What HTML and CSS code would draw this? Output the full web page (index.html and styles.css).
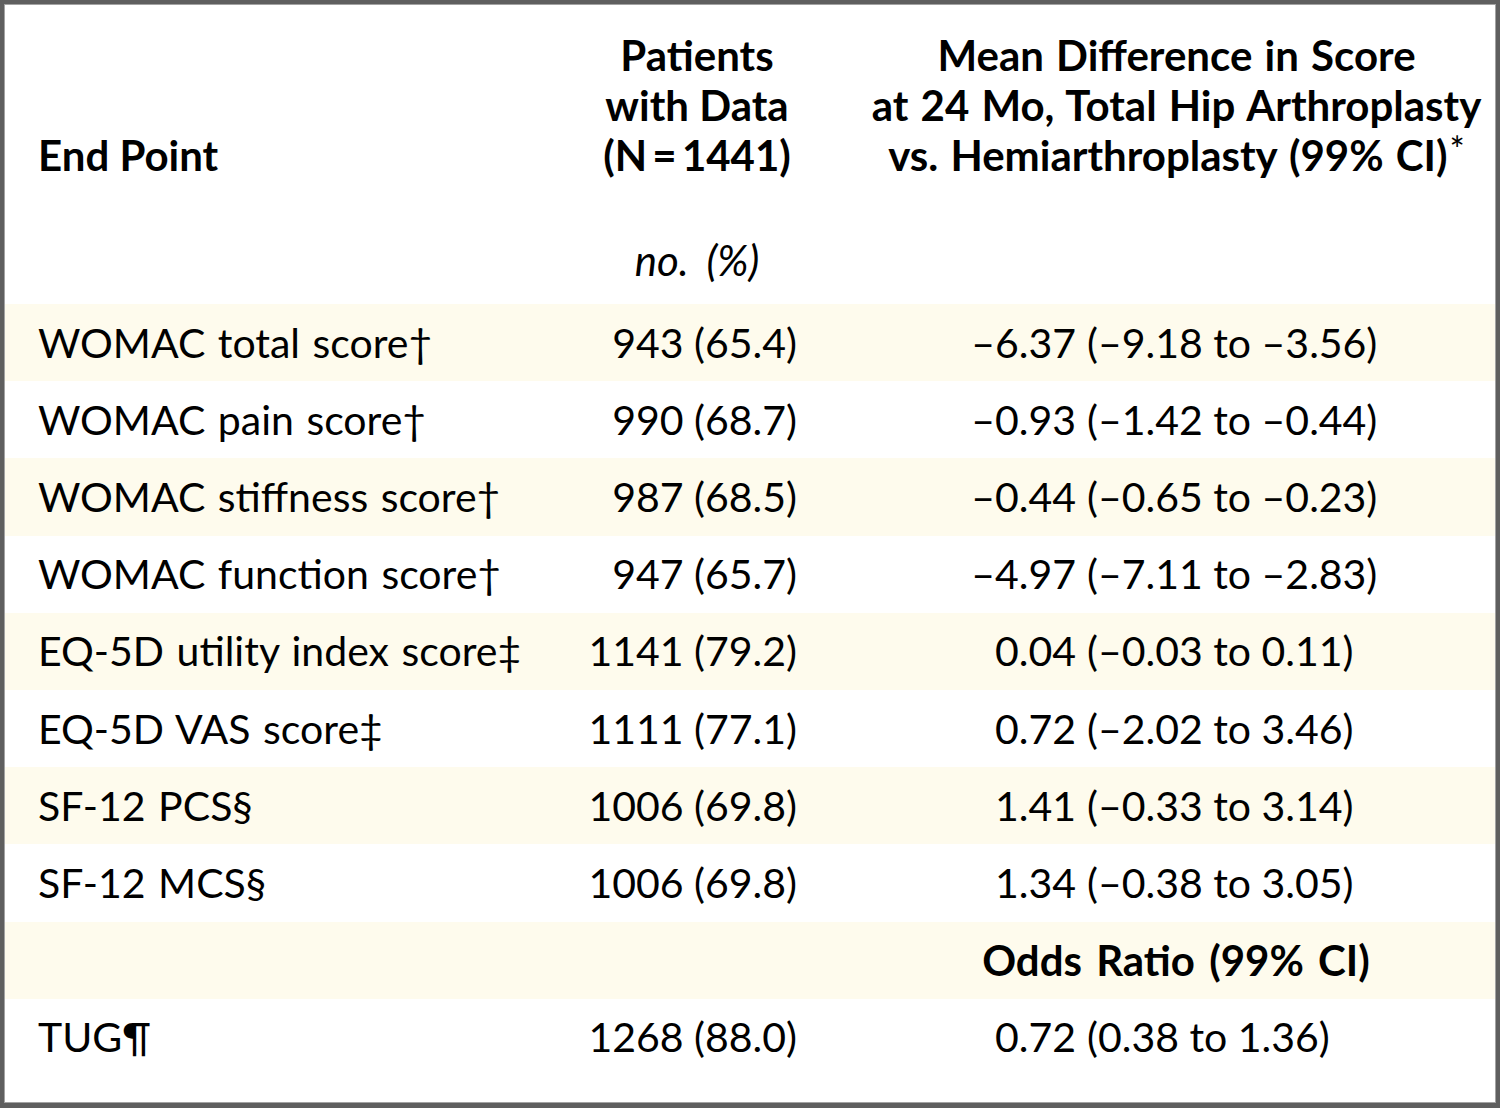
FILE: index.html
```html
<!DOCTYPE html>
<html lang="en">
<head>
<meta charset="utf-8">
<title>End Point Table</title>
<link rel="stylesheet" href="styles.css">
</head>
<body>
<div class="frame">
  <div class="inner">
    <div class="head">
      <div class="hcell h-end">End Point</div>
      <div class="hcell h-pat">Patients<br>with Data<br>(N&#8201;=&#8201;1441)</div>
      <div class="hcell h-mean">Mean Difference in Score<br>at 24 Mo, Total Hip Arthroplasty<br>vs. Hemiarthroplasty (99% CI)<span class="ast">*</span></div>
      <div class="unit-spacer"></div>
      <div class="unit">no. (%)</div>
      <div class="unit-spacer"></div>
    </div>

    <div class="row alt">
      <div class="c-label">WOMAC total score†</div>
      <div class="c-n">943 (65.4)</div>
      <div class="c-est">–6.37</div>
      <div class="c-ci">(–9.18 to –3.56)</div>
    </div>
    <div class="row">
      <div class="c-label">WOMAC pain score†</div>
      <div class="c-n">990 (68.7)</div>
      <div class="c-est">–0.93</div>
      <div class="c-ci">(–1.42 to –0.44)</div>
    </div>
    <div class="row alt">
      <div class="c-label">WOMAC stiffness score†</div>
      <div class="c-n">987 (68.5)</div>
      <div class="c-est">–0.44</div>
      <div class="c-ci">(–0.65 to –0.23)</div>
    </div>
    <div class="row">
      <div class="c-label">WOMAC function score†</div>
      <div class="c-n">947 (65.7)</div>
      <div class="c-est">–4.97</div>
      <div class="c-ci">(–7.11 to –2.83)</div>
    </div>
    <div class="row alt">
      <div class="c-label">EQ-5D utility index score‡</div>
      <div class="c-n">1141 (79.2)</div>
      <div class="c-est">0.04</div>
      <div class="c-ci">(–0.03 to 0.11)</div>
    </div>
    <div class="row">
      <div class="c-label">EQ-5D VAS score‡</div>
      <div class="c-n">1111 (77.1)</div>
      <div class="c-est">0.72</div>
      <div class="c-ci">(–2.02 to 3.46)</div>
    </div>
    <div class="row alt">
      <div class="c-label">SF-12 PCS§</div>
      <div class="c-n">1006 (69.8)</div>
      <div class="c-est">1.41</div>
      <div class="c-ci">(–0.33 to 3.14)</div>
    </div>
    <div class="row">
      <div class="c-label">SF-12 MCS§</div>
      <div class="c-n">1006 (69.8)</div>
      <div class="c-est">1.34</div>
      <div class="c-ci">(–0.38 to 3.05)</div>
    </div>
    <div class="row alt">
      <div class="c-label"></div>
      <div class="c-n"></div>
      <div class="c-sub">Odds Ratio (99% CI)</div>
    </div>
    <div class="row">
      <div class="c-label">TUG¶</div>
      <div class="c-n">1268 (88.0)</div>
      <div class="c-est">0.72</div>
      <div class="c-ci">(0.38 to 1.36)</div>
    </div>
  </div>
</div>
</body>
</html>
```

FILE: styles.css
```css
html, body {
  margin: 0;
  padding: 0;
  background: #ffffff;
}

.frame {
  width: 1500px;
  height: 1108px;
  box-sizing: border-box;
  border: 4px solid #5f5f5f;
  border-bottom-width: 5px;
  background: #ffffff;
}

.inner {
  height: 100%;
  box-sizing: border-box;
  border: 1px solid #a3a3a3;
  font-family: "Lato", "Open Sans", sans-serif;
  color: #000000;
  font-size: 41px;
}

.head {
  display: grid;
  grid-template-columns: 555px 274px 1fr;
  padding-top: 25px;
  padding-bottom: 19px;
  font-weight: 700;
  font-size: 42px;
  line-height: 50px;
}

.hcell {
  align-self: end;
  white-space: nowrap;
}

.h-end {
  padding-left: 33px;
}

.h-pat {
  text-align: center;
}

.h-mean {
  text-align: center;
  padding-left: 24px;
  word-spacing: 2px;
}

.ast {
  font-size: 36px;
  font-weight: 400;
  vertical-align: 8px;
  line-height: 0;
  margin-left: 2px;
}

.unit {
  margin-top: 55px;
  text-align: center;
  font-weight: 400;
  font-size: 42px;
  font-style: italic;
  word-spacing: 8px;
}

.row {
  display: grid;
  grid-template-columns: 555px 240px 276px 1fr;
  align-items: center;
  height: 77.2px;
  line-height: 50px;
}

.row.alt {
  background: #fefbed;
}

.c-label {
  padding-left: 33px;
  white-space: nowrap;
  word-spacing: 2px;
}

.c-n {
  text-align: right;
  padding-right: 3px;
  white-space: nowrap;
}

.c-est {
  text-align: right;
  white-space: nowrap;
}

.c-ci {
  padding-left: 11px;
  white-space: nowrap;
}

.c-sub {
  grid-column: 3 / 5;
  text-align: center;
  padding-left: 57px;
  font-weight: 700;
  font-size: 42px;
  word-spacing: 4px;
}
```
